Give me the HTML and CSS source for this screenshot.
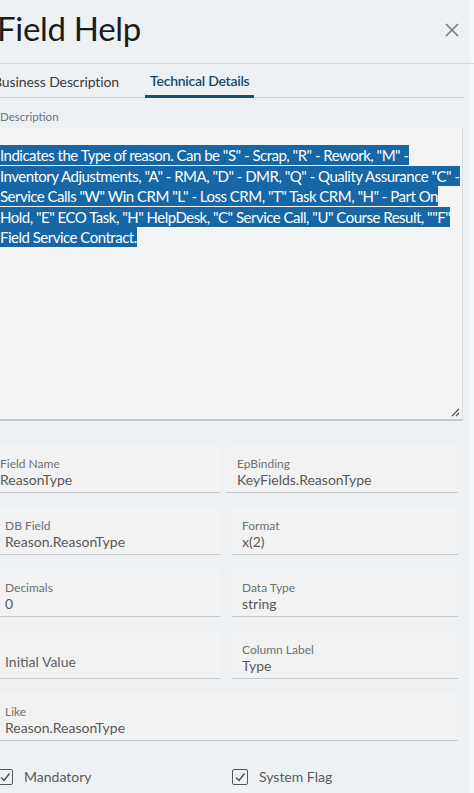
FILE: index.html
```html
<!DOCTYPE html>
<html lang="en">
<head>
    <meta charset="UTF-8">
    <meta name="viewport" content="width=device-width, initial-scale=1.0">
    <title>Field Help</title>
    <link rel="stylesheet" href="styles.css">
</head>
<body>
    <div class="dialog">
        <div class="header">
            <h1 class="title">Field Help</h1>
            <svg class="close" width="16" height="16" viewBox="0 0 16 16">
                <path d="M2 2 L14 14 M14 2 L2 14" stroke="#7a7d80" stroke-width="1.7" fill="none"/>
            </svg>
        </div>

        <div class="tabs">
            <div class="tab">Business Description</div>
            <div class="tab active">Technical Details</div>
        </div>

        <div class="content">
            <div class="small-label">Description</div>
            <div class="textarea">
                <span class="sel">Indicates the Type of reason. Can be "S" - Scrap, "R" - Rework, "M" -<br>Inventory Adjustments, "A" - RMA, "D" - DMR, "Q" - Quality Assurance "C" -<br>Service Calls "W" Win CRM "L" - Loss CRM, "T" Task CRM, "H" - Part On<br>Hold, "E" ECO Task, "H" HelpDesk, "C" Service Call, "U" Course Result, ""F"<br>Field Service Contract.</span>
                <svg class="grip" width="9" height="9" viewBox="0 0 9 9">
                    <path d="M8 1 L1 8 M8 5 L5 8" stroke="#555" stroke-width="1.2" fill="none"/>
                </svg>
            </div>

            <div class="fields">
                <div class="field first-left">
                    <div class="small-label">Field Name</div>
                    <div class="value">ReasonType</div>
                </div>
                <div class="field first-right">
                    <div class="small-label">EpBinding</div>
                    <div class="value">KeyFields.ReasonType</div>
                </div>

                <div class="field">
                    <div class="small-label">DB Field</div>
                    <div class="value">Reason.ReasonType</div>
                </div>
                <div class="field">
                    <div class="small-label">Format</div>
                    <div class="value">x(2)</div>
                </div>

                <div class="field">
                    <div class="small-label">Decimals</div>
                    <div class="value">0</div>
                </div>
                <div class="field">
                    <div class="small-label">Data Type</div>
                    <div class="value">string</div>
                </div>

                <div class="field">
                    <div class="placeholder">Initial Value</div>
                </div>
                <div class="field">
                    <div class="small-label">Column Label</div>
                    <div class="value">Type</div>
                </div>

                <div class="field wide">
                    <div class="small-label">Like</div>
                    <div class="value">Reason.ReasonType</div>
                </div>
            </div>

            <div class="checks">
                <label class="check first">
                    <span class="box"><svg width="12" height="12" viewBox="0 0 12 12"><path d="M2 6.5 L5 9.5 L10.5 2.5" stroke="#4a4a4a" stroke-width="1.3" fill="none"/></svg></span>
                    Mandatory
                </label>
                <label class="check">
                    <span class="box"><svg width="12" height="12" viewBox="0 0 12 12"><path d="M2 6.5 L5 9.5 L10.5 2.5" stroke="#4a4a4a" stroke-width="1.3" fill="none"/></svg></span>
                    System Flag
                </label>
            </div>
        </div>
    </div>
</body>
</html>
```

FILE: styles.css
```css
html, body { margin: 0; height: 100%; }
body { background: #f5f7f9; font-family: Lato, "Liberation Sans", sans-serif; color: #333; overflow: hidden; }
.dialog { width: 470px; height: 100%; background: #eef1f4; }

.header { display: flex; justify-content: space-between; align-items: flex-start; width: 474px; height: 63px; border-bottom: 1px solid #d5d9dd; }
.title { margin: 12px 0 0 -3px; font-size: 33px; font-weight: 400; line-height: 1; letter-spacing: -0.3px; color: #1b1b1b; }
.close { margin: 22px 14px 0 0; }

.tabs { display: flex; gap: 21px; width: 464px; height: 33px; border-bottom: 1px solid #d3d7db; }
.tab { padding: 0 5px; line-height: 35px; font-size: 14px; letter-spacing: -0.1px; color: #3a3a3a; margin-bottom: -1px; }
.tab:first-child { margin-left: -12px; }
.tab.active { color: #1c4867; font-weight: 600; letter-spacing: -0.25px; border-bottom: 3px solid #1d4c6c; height: 31px; line-height: 34px; }

.content { padding-top: 12px; }
.small-label { font-size: 11.5px; line-height: 14px; color: #6d7175; }

.textarea { position: relative; margin-top: 4px; width: 462px; height: 274px; padding-top: 17px; background: #f3f3f3; border-right: 1px solid #dcdcdc; border-bottom: 2px solid #c9c9c9; font-size: 15px; letter-spacing: -0.5px; line-height: 20.6px; white-space: nowrap; }
.sel { background: #1766a5; color: #fff; padding: 1px 0; }
.grip { position: absolute; right: 2px; bottom: 2px; }

.fields { display: grid; grid-template-columns: 220px 226px; column-gap: 12px; row-gap: 14px; margin-top: 24px; }
.field { height: 35px; padding: 12px 0 0 5px; background: #f2f2f2; border-bottom: 1px solid #c9c9c9; }
.field:nth-child(even) { padding-left: 10px; }
.field.first-left { padding-left: 0; }
.field.first-right { margin-left: -6px; padding-left: 11px; }
.field.wide { grid-column: 1 / 3; }
.field .small-label { font-size: 12px; }
.value { font-size: 14px; line-height: 18px; color: #595959; }
.placeholder { font-size: 14px; line-height: 18px; color: #606060; padding-top: 10px; }

.checks { display: grid; grid-template-columns: 220px 226px; column-gap: 12px; margin-top: 27px; }
.check { display: flex; align-items: center; gap: 11px; font-size: 14px; color: #5a5a5a; }
.check.first { margin-left: -3px; }
.box { display: flex; align-items: center; justify-content: center; width: 14px; height: 14px; border: 1.5px solid #555; border-radius: 2px; }
```
